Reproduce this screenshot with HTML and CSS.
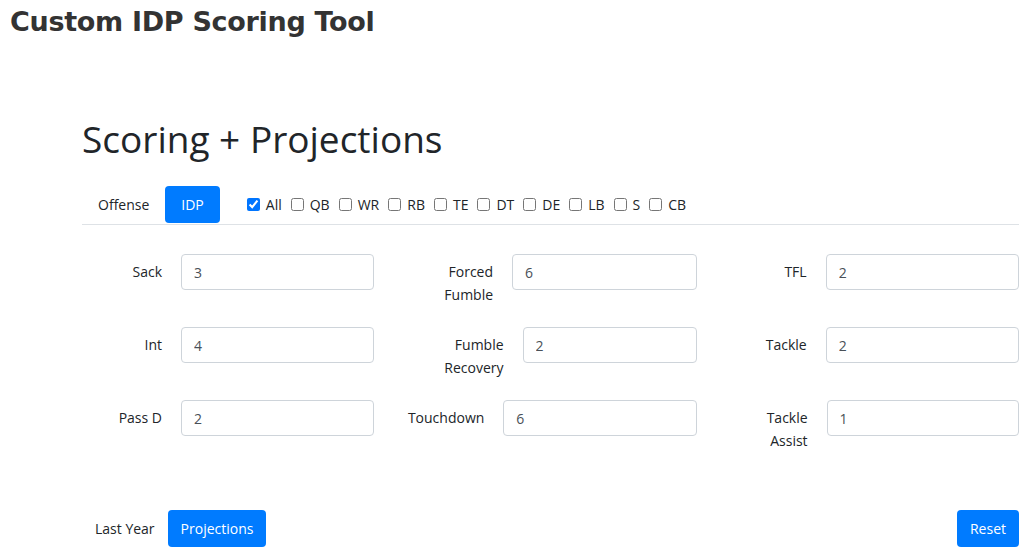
FILE: index.html
```html
<!DOCTYPE html>
<html lang="en">
<head>
<meta charset="utf-8">
<title>Custom IDP Scoring Tool</title>
<link rel="stylesheet" href="styles.css">
</head>
<body>
<h2 class="app-title">Custom IDP Scoring Tool</h2>
<main class="container">
  <h1 class="page-title">Scoring + Projections</h1>
  <div class="tabbar">
    <nav class="pills">
      <a class="pill">Offense</a>
      <a class="pill active">IDP</a>
    </nav>
    <div class="filters">
      <label class="chk"><input type="checkbox" checked><span>All</span></label>
      <label class="chk"><input type="checkbox"><span>QB</span></label>
      <label class="chk"><input type="checkbox"><span>WR</span></label>
      <label class="chk"><input type="checkbox"><span>RB</span></label>
      <label class="chk"><input type="checkbox"><span>TE</span></label>
      <label class="chk"><input type="checkbox"><span>DT</span></label>
      <label class="chk"><input type="checkbox"><span>DE</span></label>
      <label class="chk"><input type="checkbox"><span>LB</span></label>
      <label class="chk"><input type="checkbox"><span>S</span></label>
      <label class="chk"><input type="checkbox"><span>CB</span></label>
    </div>
  </div>
  <form class="grid">
    <div class="field"><label class="lbl">Sack</label><input class="inp" value="3"></div>
    <div class="field"><label class="lbl two">Forced<br>Fumble</label><input class="inp" value="6"></div>
    <div class="field"><label class="lbl">TFL</label><input class="inp" value="2"></div>
    <div class="field"><label class="lbl">Int</label><input class="inp" value="4"></div>
    <div class="field"><label class="lbl two">Fumble<br>Recovery</label><input class="inp" value="2"></div>
    <div class="field"><label class="lbl">Tackle</label><input class="inp" value="2"></div>
    <div class="field"><label class="lbl">Pass D</label><input class="inp" value="2"></div>
    <div class="field"><label class="lbl">Touchdown</label><input class="inp" value="6"></div>
    <div class="field"><label class="lbl two">Tackle<br>Assist</label><input class="inp" value="1"></div>
  </form>
  <div class="actions">
    <div class="mode">
      <button class="btn btn-plain" type="button">Last Year</button>
      <button class="btn btn-primary" type="button">Projections</button>
    </div>
    <button class="btn btn-primary" type="button">Reset</button>
  </div>
</main>
</body>
</html>
```
FILE: styles.css
```css
* { box-sizing: border-box; }
body {
  margin: 0;
  font-family: "Open Sans", "Noto Sans", sans-serif;
  font-size: 14px;
  color: #212529;
  background: #fff;
}
.app-title {
  margin: 5px 0 0 10px;
  font-family: "DejaVu Sans", sans-serif;
  font-weight: 700;
  font-size: 27px;
  line-height: 34px;
  color: #333;
  letter-spacing: -0.3px;
}
.container {
  width: 937px;
  margin-left: 82px;
}
.page-title {
  margin: 76px 0 0 0;
  font-size: 37px;
  font-weight: 500;
  line-height: 48px;
}
.tabbar {
  margin-top: 23px;
  display: flex;
  align-items: center;
  border-bottom: 1px solid #dee2e6;
  height: 39px;
  padding-bottom: 1px;
}
.pills { display: flex; }
.pill {
  display: block;
  padding: 7px 16px;
  line-height: 23px;
  border-radius: 4px;
  color: #212529;
}
.pill.active {
  background: #007bff;
  color: #fff;
}
.filters {
  display: flex;
  align-items: center;
  margin-left: 27px;
  gap: 9px;
}
.chk {
  display: flex;
  align-items: center;
  gap: 6px;
}
.chk input {
  margin: 0;
  width: 13px;
  height: 13px;
}
.grid {
  margin-top: 29px;
  display: grid;
  grid-template-columns: repeat(3, minmax(0, 1fr));
  grid-auto-rows: 36px;
  column-gap: 30px;
  row-gap: 37px;
}
.field {
  display: flex;
  align-items: flex-start;
  min-width: 0;
}
.lbl {
  flex: 0 0 auto;
  min-width: 99px;
  padding: 6px 19px 0 0;
  line-height: 23px;
  text-align: right;
}
.lbl.two { padding-left: 40px; }
.inp {
  flex: 1 1 auto;
  width: 0;
  min-width: 0;
  height: 36px;
  padding: 6px 12px;
  font: inherit;
  color: #495057;
  border: 1px solid #ced4da;
  border-radius: 4px;
  background: #fff;
}
.actions {
  margin-top: 74px;
  display: flex;
  justify-content: space-between;
  align-items: center;
}
.mode { display: flex; gap: 0; }
.btn {
  font: inherit;
  line-height: 23px;
  padding: 6px 12px;
  border: 1px solid transparent;
  border-radius: 4px;
  cursor: pointer;
}
.btn-plain { background: transparent; color: #212529; }
.btn-primary { background: #007bff; color: #fff; }
```
